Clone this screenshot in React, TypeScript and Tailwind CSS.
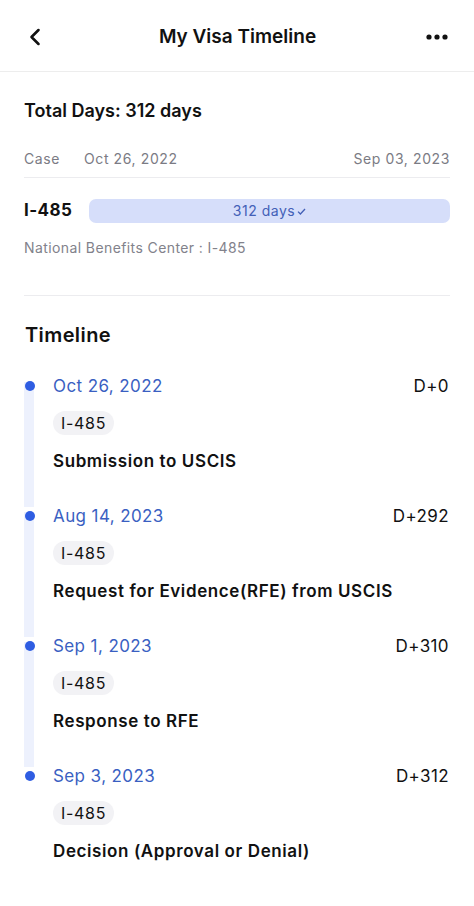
import { ChevronLeft } from "lucide-react";

interface TimelineEvent {
  date: string;
  offset: string;
  form: string;
  title: string;
}

const EVENTS: TimelineEvent[] = [
  { date: "Oct 26, 2022", offset: "D+0", form: "I-485", title: "Submission to USCIS" },
  { date: "Aug 14, 2023", offset: "D+292", form: "I-485", title: "Request for Evidence(RFE) from USCIS" },
  { date: "Sep 1, 2023", offset: "D+310", form: "I-485", title: "Response to RFE" },
  { date: "Sep 3, 2023", offset: "D+312", form: "I-485", title: "Decision (Approval or Denial)" },
];

export default function App() {
  return (
    <div className="w-[474px] min-h-[906px] bg-white text-[#111] font-['Inter','Noto_Sans',sans-serif]">
      {/* Header */}
      <div className="h-[72px] pt-[3px] flex items-center justify-between px-[24px] border-b border-[#ededed]">
        <ChevronLeft size={28} strokeWidth={2.2} className="-ml-[3px] text-[#111]" />
        <h1 className="text-[19px] font-semibold tracking-[0px]">My Visa Timeline</h1>
        <svg width="22" height="6" viewBox="0 0 22 6" className="mr-[2px]">
          <circle cx="3" cy="3" r="2.6" fill="#111" />
          <circle cx="11" cy="3" r="2.6" fill="#111" />
          <circle cx="19" cy="3" r="2.6" fill="#111" />
        </svg>
      </div>

      {/* Summary */}
      <div className="px-[24px]">
        <div className="pt-[27px] text-[18px] leading-[24px] font-semibold">Total Days: 312 days</div>

        <div className="mt-[25px] flex items-center h-[20px] text-[14px] text-[#7b7b84] tracking-[0.6px]">
          <span className="w-[60px]">Case</span>
          <span>Oct 26, 2022</span>
          <span className="ml-auto">Sep 03, 2023</span>
        </div>
        <div className="mt-[9px] border-b border-[#ececef]" />

        <div className="mt-[20px] flex items-center gap-[16px]">
          <span className="w-[49px] text-[17px] font-bold tracking-[0.4px]">I-485</span>
          <div className="flex-1 h-[24px] rounded-[7px] bg-[#d6defa] flex items-center justify-center text-[14px] text-[#4360b7] tracking-[0.5px]">
            312 days
            <svg width="9" height="7" viewBox="0 0 9 7" className="ml-[2px] mt-[2px]">
              <path d="M1 3.6 L3.4 6 L8 1" fill="none" stroke="#4360b7" strokeWidth="1.3" />
            </svg>
          </div>
        </div>

        <div className="mt-[14px] h-[20px] flex items-center text-[14px] text-[#82828b] tracking-[0.4px]">
          National Benefits Center : I-485
        </div>
        <div className="mt-[37px] border-b border-[#ececef]" />

        <h2 className="mt-[26px] ml-[1px] text-[20px] leading-[26px] font-semibold tracking-[0.4px]">Timeline</h2>

        {/* Timeline */}
        <div className="mt-[29px]">
          {EVENTS.map((ev, idx) => {
            const isLast = idx === EVENTS.length - 1;
            return (
              <div key={idx} className="flex h-[130px]">
                <div className="relative w-[10px] shrink-0">
                  {!isLast && <div className="absolute top-[5px] bottom-0 left-0 w-[10px] bg-[#edf1fd]" />}
                  <div className="relative mt-[4px] ml-[1px] size-[10px] rounded-full bg-[#2f5de2]" />
                </div>
                <div className="flex-1 ml-[19px]">
                  <div className="h-[20px] flex items-center justify-between text-[17px] tracking-[0.4px]">
                    <span className="text-[#3a5fc2]">{ev.date}</span>
                    <span className="mr-[1px] text-[#111]">{ev.offset}</span>
                  </div>
                  <div className="mt-[14px] inline-flex h-[24px] items-center rounded-full bg-[#f2f2f5] px-[8px] text-[16px] tracking-[0.7px]">
                    {ev.form}
                  </div>
                  <div className="mt-[17px] h-[20px] flex items-center text-[17px] font-semibold tracking-[0.6px]">
                    {ev.title}
                  </div>
                </div>
              </div>
            );
          })}
        </div>
      </div>
    </div>
  );
}
